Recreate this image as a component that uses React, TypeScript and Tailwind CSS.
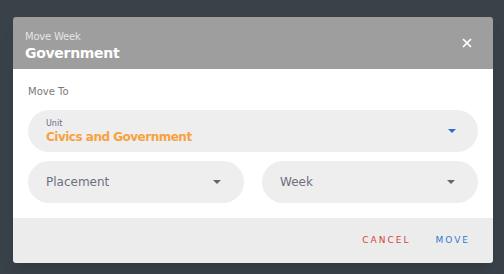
import React from 'react';
import { X } from 'lucide-react';

const Caret: React.FC<{ className?: string }> = ({ className }) => (
  <svg width="8" height="4" viewBox="0 0 8 4" className={className}>
    <path d="M0 0 L8 0 L4 4 Z" fill="currentColor" />
  </svg>
);

const App: React.FC = () => {
  return (
    <div className="w-[504px] h-[274px] bg-[#3a4249] pt-[17px] pl-[13px] font-['DejaVu_Sans',sans-serif]">
      <div className="w-[480px] rounded-[3px] overflow-hidden shadow-lg">
        {/* Header */}
        <div className="h-[52px] bg-[#9e9e9e] flex items-center justify-between pl-[12px] pr-[19px]">
          <div className="flex flex-col leading-none mt-[5px]">
            <span className="text-[10px] text-[#e4e4e4] tracking-[-0.2px]">Move Week</span>
            <span className="text-[14px] font-bold text-white mt-[4px] tracking-[-0.3px]">Government</span>
          </div>
          <X className="w-[14px] h-[14px] text-white" strokeWidth={3} />
        </div>

        {/* Body */}
        <div className="bg-white px-[15px] pt-[18px] pb-[15px]">
          <div className="text-[10px] text-[#7a7a7a] leading-none">Move To</div>
          <div className="mt-[13px] h-[42px] rounded-full bg-[#eeeeee] flex items-center justify-between pl-[18px] pr-[22px]">
            <div className="flex flex-col leading-none">
              <span className="text-[8px] text-[#6b6b8a]">Unit</span>
              <span className="text-[12px] font-bold text-[#f7a23f] mt-[3px] tracking-[-0.5px]">Civics and Government</span>
            </div>
            <Caret className="text-[#2d6fc4]" />
          </div>
          <div className="mt-[9px] grid grid-cols-2 gap-[18px]">
            <div className="h-[42px] rounded-full bg-[#eeeeee] flex items-center justify-between pl-[18px] pr-[23px]">
              <span className="text-[12px] text-[#6e6e7e]">Placement</span>
              <Caret className="text-[#666666]" />
            </div>
            <div className="h-[42px] rounded-full bg-[#eeeeee] flex items-center justify-between pl-[18px] pr-[23px]">
              <span className="text-[12px] text-[#6e6e7e]">Week</span>
              <Caret className="text-[#666666]" />
            </div>
          </div>
        </div>

        {/* Footer */}
        <div className="h-[45px] bg-[#ececec] flex items-center justify-end pr-[23px] gap-[25px]">
          <button className="text-[9px] tracking-[2px] text-[#d0463b] font-medium">CANCEL</button>
          <button className="text-[9px] tracking-[2px] text-[#2f7ad0] font-medium">MOVE</button>
        </div>
      </div>
    </div>
  );
};

export default App;
